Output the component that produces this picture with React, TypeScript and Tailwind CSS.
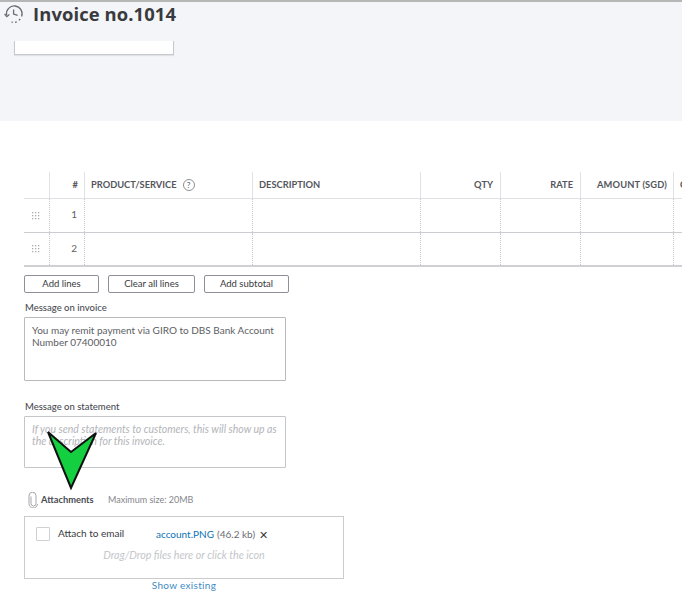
import React from "react";

function Grip() {
  const dots = [0, 3, 6].flatMap((y) => [0, 3, 6].map((x) => [x, y]));
  return (
    <svg width="8" height="8" viewBox="0 0 8 8">
      {dots.map(([x, y]) => (
        <rect key={`${x}-${y}`} x={x} y={y} width="1.3" height="1.3" fill="#a9adb3" />
      ))}
    </svg>
  );
}

const cols = "grid grid-cols-[26px_35px_168px_168px_80px_80px_93px_40px]";

function Row({ n, last }: { n: number; last?: boolean }) {
  const cell = "border-r border-dotted border-[#c4c6ca]";
  return (
    <div className={`${cols} h-[34px] ${last ? "border-b-2 border-[#cfd0d3]" : "border-b border-[#cbcdd1]"}`}>
      <div className={`${cell} flex items-center justify-center pr-[2px]`}><Grip /></div>
      <div className={`${cell} flex items-center justify-end pr-[7px] pb-[2px] text-[10px] text-[#5c6066]`}>{n}</div>
      <div className={cell} />
      <div className={cell} />
      <div className={cell} />
      <div className={cell} />
      <div className={cell} />
      <div />
    </div>
  );
}

function Btn({ w, children }: { w: string; children: React.ReactNode }) {
  return (
    <button className={`${w} h-[18px] rounded-[2px] border border-[#8d9096] bg-white text-[9.5px] text-[#393a3d] flex items-center justify-center`}>
      {children}
    </button>
  );
}

export default function App() {
  const head = "border-r border-[#e0e1e4] flex items-center text-[9.3px] font-bold text-[#54565c]";
  return (
    <div className="w-[682px] h-[605px] overflow-hidden bg-white relative font-['Lato',sans-serif]">
      <header className="h-[121px] bg-[#f3f5f9] border-t-2 border-[#b5b6b6]">
        <div className="flex items-center h-[24px] pl-[4px]">
          <svg width="20" height="20" viewBox="0 0 20 20" fill="none" stroke="#6b6c72" strokeWidth="1.3" className="mr-[9px]">
            <path d="M2.6 11 A7.8 7.8 0 1 1 17.6 12.5" />
            <path d="M16.2 15 L15 16.3 M12.8 17.8 L11 18.3 M8.8 18.4 L7.4 18" />
            <path d="M0.6 10 L2.8 12.6 L5.4 10.4" />
            <path d="M9.6 5.4 V10 L13.6 11.4" />
          </svg>
          <h1 className="font-['Open_Sans',sans-serif] text-[18.4px] font-bold text-[#393a3d] tracking-[0.1px]">Invoice no.1014</h1>
        </div>
        <div className="ml-[14px] mt-[15px] w-[160px] h-[14px] bg-white border-x border-b border-[#c8c9cc] shadow-[0_1px_1px_rgba(0,0,0,0.08)]" />
      </header>

      <section className="ml-[24px] mt-[51px]">
        <div className={`${cols} h-[27px] border-b border-[#e0e1e4]`}>
          <div className={head} />
          <div className={`${head} justify-end pr-[6px]`}>#</div>
          <div className={`${head} pl-[6px] gap-[6px]`}>
            PRODUCT/SERVICE
            <span className="w-[12px] h-[12px] rounded-full border border-[#8d9096] text-[8px] font-normal flex items-center justify-center">?</span>
          </div>
          <div className={`${head} pl-[6px]`}>DESCRIPTION</div>
          <div className={`${head} justify-end pr-[7px]`}>QTY</div>
          <div className={`${head} justify-end pr-[7px]`}>RATE</div>
          <div className={`${head} justify-end pr-[6px] whitespace-nowrap tracking-[0.15px]`}>AMOUNT (SGD)</div>
          <div className="flex items-center pl-[6px] text-[9.3px] font-bold text-[#54565c]">C</div>
        </div>
        <Row n={1} />
        <Row n={2} last />

        <div className="flex gap-[9px] mt-[8px]">
          <Btn w="w-[75px]">Add lines</Btn>
          <Btn w="w-[87px]">Clear all lines</Btn>
          <Btn w="w-[85px]">Add subtotal</Btn>
        </div>

        <div>
          <div className="mt-[7px] pl-[1px] h-[16px] flex items-center text-[9.5px] font-medium text-[#4a4c52]">Message on invoice</div>
          <div className="mt-[1px] w-[262px] h-[64px] border border-[#b8babe] rounded-[1px] px-[7px] pt-[6px] text-[10px] leading-[12px] text-[#5c5e63]">
            You may remit payment via GIRO to DBS Bank Account Number 07400010
          </div>

          <div className="mt-[18px] pl-[1px] h-[16px] flex items-center text-[9.5px] font-medium text-[#4a4c52]">Message on statement</div>
          <div className="mt-[1px] w-[262px] h-[52px] border border-[#c4c6ca] rounded-[1px] px-[7px] pt-[6px] text-[10.5px] leading-[12px] italic text-[#b3b5b9]">
            If you send statements to customers, this will show up as the description for this invoice.
          </div>

          <div className="mt-[24px] h-[16px] flex items-center ml-[4px]">
            <svg width="11" height="16" viewBox="0 0 11 16" fill="none" stroke="#a4a6ab" strokeWidth="1" className="mr-[2px]">
              <path d="M1 4 A3.5 3.5 0 0 1 8 3.5 V11.5 A2.5 2.5 0 0 1 3 11.5 V4.5" />
              <path d="M1 4 V11.5 A4 4 0 0 0 9.5 12" />
            </svg>
            <span className="text-[9.3px] font-bold text-[#4a4c52] w-[67px]">Attachments</span>
            <span className="text-[9px] text-[#85878c]">Maximum size: 20MB</span>
          </div>

          <div className="mt-[8px] w-[320px] h-[63px] border border-[#c9cbce] flex flex-col">
            <div className="flex items-center h-[33px] pl-[11px] pt-[1px]">
              <span className="w-[14px] h-[14px] border border-[#cfd1d4] rounded-[1px]" />
              <span className="ml-[8px] w-[98px] text-[10px] text-[#393a3d] mb-[2px]">Attach to email</span>
              <span className="text-[10px] text-[#0b72b5]">account.PNG</span>
              <span className="ml-[3px] text-[10px] text-[#6b6c72]">(46.2 kb)</span>
              <span className="ml-[4px] text-[11px] leading-none text-[#393a3d]">✕</span>
            </div>
            <div className="text-center text-[10.7px] italic text-[#c4c6ca] mt-[-3px]">Drag/Drop files here or click the icon</div>
          </div>
          <div className="w-[320px] text-center mt-[-1px] text-[10px] tracking-[0.3px] text-[#3d8bc4]">Show existing</div>
        </div>
      </section>

      <svg className="absolute left-[44px] top-[428px]" width="58" height="64" viewBox="44 428 58 64">
        <polygon points="48,432 71,452 96,433 71,488" fill="#14cf40" stroke="#111" strokeWidth="2" strokeLinejoin="miter" />
      </svg>
    </div>
  );
}
